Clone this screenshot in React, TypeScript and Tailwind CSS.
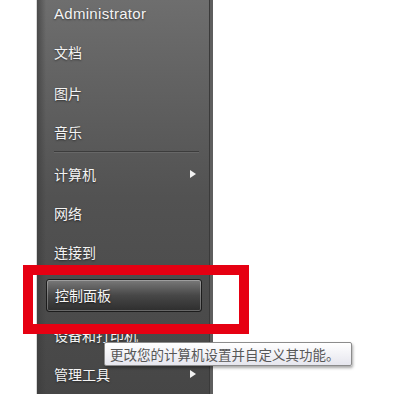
const font = { fontFamily: '"Noto Sans CJK SC", "Noto Sans", sans-serif' }

type ItemProps = {
	label: string
	arrow?: boolean
	className?: string
}

const Arrow = () => (
	<svg width="6" height="10" viewBox="0 0 6 10" className="mr-[13px]">
		<path d="M0 1 L6 5 L0 9 Z" fill="#f2f2f2" />
	</svg>
)

const MenuItem = ({ label, arrow, className }: ItemProps) => (
	<div className={`flex items-center justify-between pl-[8px] ${className ?? 'h-[40px]'}`}>
		<span className="text-[14px] leading-none text-[#f4f4f4] [text-shadow:0_1px_2px_rgba(0,0,0,0.5)]">{label}</span>
		{arrow && <Arrow />}
	</div>
)

export default function App() {
	return (
		<div
			className="relative w-[413px] h-[394px] overflow-hidden bg-white flex"
			style={font}
		>
			<div className="w-[37px] border-r border-[#d8d8d8]" />

			<div className="relative w-[176px] h-full flex bg-gradient-to-b from-[#6e6e6e] via-[#525252] to-[#464646]">
				<div className="w-[9px] bg-gradient-to-r from-[#3c3c3c] to-transparent opacity-70" />
				<div className="flex-1 flex flex-col">
					<div className="flex items-center pl-[8px] h-[28px]">
						<span
							className="text-[15px] leading-none tracking-[0.3px] text-[#f4f4f4] [text-shadow:0_1px_2px_rgba(0,0,0,0.5)]"
							style={{ fontFamily: '"Liberation Sans", Arial, sans-serif' }}
						>
							Administrator
						</span>
					</div>
					<MenuItem label="文档" className="h-[40px] mt-[5px]" />
					<MenuItem label="图片" className="h-[40px] mt-[2px]" />
					<MenuItem label="音乐" className="h-[40px]" />
					<div className="ml-[8px] mr-[10px]">
						<div className="h-px bg-[#3c3c3c]" />
						<div className="h-px bg-[#676767]" />
					</div>
					<MenuItem label="计算机" arrow className="h-[40px] mt-[1px]" />
					<MenuItem label="网络" className="h-[40px]" />
					<MenuItem label="连接到" className="h-[40px]" />
					<div className="mr-[7px] mt-[7px] h-[34px] rounded-[3px] border border-[#1c1c1c] bg-gradient-to-b from-[#7a7a7a] via-[#474747] to-[#2e2e2e] shadow-[inset_0_0_0_1px_rgba(255,255,255,0.28)] flex items-center pl-[8px]">
						<span className="text-[14px] leading-none text-[#f6f6f6] [text-shadow:0_1px_2px_rgba(0,0,0,0.6)]">控制面板</span>
					</div>
					<MenuItem label="设备和打印机" className="h-[40px] mt-[4px]" />
					<MenuItem label="管理工具" arrow className="h-[40px]" />
				</div>
				<div className="w-[4px] bg-[#5e5e5e] border-l border-[#3a3a3a]" />
			</div>

			<div className="absolute left-[23px] top-[265px] w-[226px] h-[69px] border-[10px] border-[#e60012]" />

			<div className="absolute left-[104px] top-[342px] w-[248px] h-[24px] rounded-[2px] border border-[#8c8c8c] bg-gradient-to-b from-white to-[#e6e6ee] shadow-[1px_2px_3px_rgba(0,0,0,0.35)] flex items-center pl-[5px]">
				<span className="text-[13.5px] text-[#575757] whitespace-nowrap">更改您的计算机设置并自定义其功能。</span>
			</div>
		</div>
	)
}
